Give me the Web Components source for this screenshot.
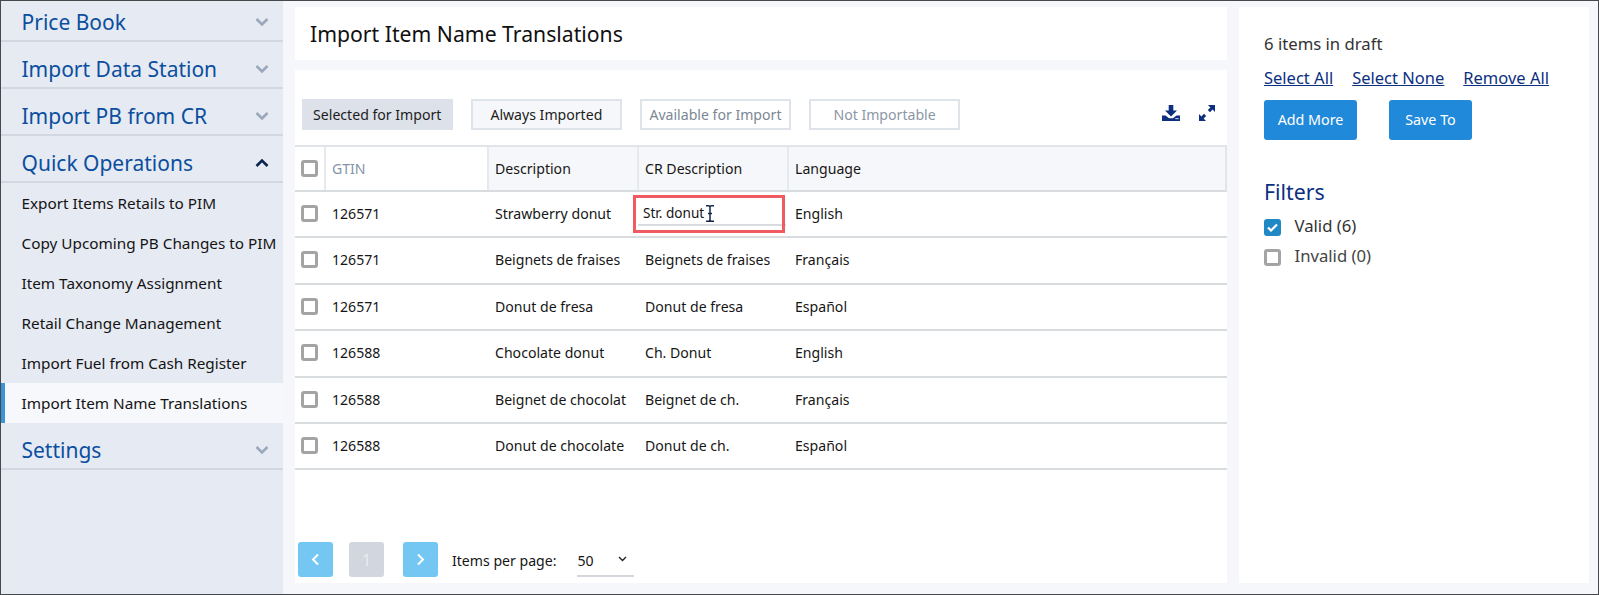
<!DOCTYPE html>
<html lang="en">
<head>
<meta charset="utf-8">
<title>Import Item Name Translations</title>
<style>
  html, body { margin: 0; padding: 0; background: #f6f7fa; }
  body { font-family: "Noto Sans", "Liberation Sans", sans-serif; }
</style>
</head>
<body>
<app-shell>
  <side-nav slot="nav"></side-nav>
  <page-title slot="main">Import Item Name Translations</page-title>
  <import-card slot="main"></import-card>
  <draft-panel slot="aside"></draft-panel>
</app-shell>

<script>
const FONT = '"Noto Sans", "Liberation Sans", sans-serif';

const CHECK_CSS = `
  .cb { width: 17px; height: 17px; box-sizing: border-box; border: 3px solid #a4a4a4; border-radius: 3px; background: #fff; display: block; flex: none; }
  .cb.on { background: #1f88c5; border-color: #1f88c5; display: flex; align-items: center; justify-content: center; }
`;

class AppShell extends HTMLElement {
  constructor() {
    super();
    this.attachShadow({ mode: "open" });
    this.shadowRoot.innerHTML = `
      <style>
        :host {
          display: grid;
          grid-template-columns: 282px 944px 362px;
          width: 1599px;
          height: 595px;
          box-sizing: border-box;
          border: 1px solid #46484c;
          background: #f6f7fa;
          font-family: ${FONT};
          overflow: hidden;
        }
        .nav { display: block; }
        .main { display: flex; flex-direction: column; row-gap: 10px; margin-left: 12px; padding: 6px 0 11px; min-height: 0; }
        .aside { display: flex; padding: 6px 0 11px; margin-left: 12px; min-height: 0; }
      </style>
      <div class="nav"><slot name="nav"></slot></div>
      <div class="main"><slot name="main"></slot></div>
      <div class="aside"><slot name="aside"></slot></div>
    `;
  }
}

class SideNav extends HTMLElement {
  constructor() {
    super();
    this.attachShadow({ mode: "open" });
  }

  connectedCallback() {
    const chevron = (open) => `
      <svg width="14" height="10" viewBox="0 0 14 10" class="${open ? "open" : ""}">
        <path d="${open ? "M1.5 8 7 2.5 12.5 8" : "M1.5 2 7 7.5 12.5 2"}" fill="none" stroke-width="2.6"/>
      </svg>`;
    const head = (label, open) =>
      `<div class="head"><span>${label}</span>${chevron(open)}</div>`;
    const item = (label, active) =>
      `<div class="item ${active ? "active" : ""}">${label}</div>`;
    this.shadowRoot.innerHTML = `
      <style>
        :host { display: block; height: 100%; background: #e6eaf3; }
        .head {
          height: 47px;
          box-sizing: border-box;
          border-bottom: 2px solid #d2d7e2;
          display: flex;
          align-items: center;
          justify-content: space-between;
          padding: 8px 14px 0 20.5px;
          font-size: 21px;
          color: #0b4f9e;
        }
        .head:first-of-type { height: 41px; padding-top: 2px; }
        .head svg { stroke: #9aa8bb; display: block; }
        .head svg.open { stroke: #0b2550; }
        .item {
          height: 40px;
          box-sizing: border-box;
          display: flex;
          align-items: center;
          padding: 0 0 0 20.5px;
          font-size: 15.3px;
          color: #141414;
        }
        .item.active { background: #f6f8fb; box-shadow: inset 4px 0 0 #3a95d8; }
      </style>
      ${head("Price Book")}
      ${head("Import Data Station")}
      ${head("Import PB from CR")}
      ${head("Quick Operations", true)}
      ${item("Export Items Retails to PIM")}
      ${item("Copy Upcoming PB Changes to PIM")}
      ${item("Item Taxonomy Assignment")}
      ${item("Retail Change Management")}
      ${item("Import Fuel from Cash Register")}
      ${item("Import Item Name Translations", true)}
      ${head("Settings")}
    `;
  }
}

class PageTitle extends HTMLElement {
  constructor() {
    super();
    this.attachShadow({ mode: "open" });
    this.shadowRoot.innerHTML = `
      <style>
        :host {
          display: flex;
          align-items: center;
          height: 53px;
          box-sizing: border-box;
          flex: none;
          padding: 0 0 0 15px;
          background: #fff;
          font-size: 21.2px;
          color: #101010;
        }
      </style>
      <slot></slot>
    `;
  }
}

class TabButton extends HTMLElement {
  constructor() {
    super();
    this.attachShadow({ mode: "open" });
    this.shadowRoot.innerHTML = `
      <style>
        :host {
          display: flex;
          align-items: center;
          justify-content: center;
          width: 150.5px;
          height: 31px;
          box-sizing: border-box;
          border: 2px solid #dfe4ea;
          padding-bottom: 1px;
          font-size: 14.1px;
          color: #1c1c1c;
          background: #f6f7fa;
        }
        :host([kind="selected"]) { background: #dde1ea; border-color: #dde1ea; }
        :host([kind="available"]) { background: #fff; color: #7b8794; }
        :host([kind="off"]) { background: #fff; color: #8b97a6; }
      </style>
      <slot></slot>
    `;
  }
}

class ImportCard extends HTMLElement {
  constructor() {
    super();
    this.attachShadow({ mode: "open" });
    this.shadowRoot.innerHTML = `
      <style>
        :host {
          display: flex;
          flex-direction: column;
          flex: 1;
          min-height: 0;
          background: #fff;
          padding-top: 29px;
          padding-bottom: 6px;
        }
        .toolbar { display: flex; align-items: center; justify-content: space-between; padding: 0 12px 0 7px; margin-bottom: 15px; }
        .tabs { display: flex; column-gap: 18.6px; }
        .tools { display: flex; align-items: center; column-gap: 19px; margin-bottom: 3px; }
        svg { display: block; }
        .spacer { flex: 1; }
      </style>
      <div class="toolbar">
        <div class="tabs">
          <tab-button kind="selected">Selected for Import</tab-button>
          <tab-button>Always Imported</tab-button>
          <tab-button kind="available">Available for Import</tab-button>
          <tab-button kind="off">Not Importable</tab-button>
        </div>
        <div class="tools">
          <svg width="18" height="16" viewBox="0 0 18 16" fill="#0c2f7f">
            <path d="M6.7 0h4.6v5.5H15L9 11.4 3 5.5h3.700z"/>
            <path d="M0 10.500h3.500L7 13.300h4l3.500-2.800H18V16H0z"/>
            <rect x="13.500" y="13" width="1.200" height="1.200" fill="#fff"/>
            <rect x="15.300" y="13" width="1.200" height="1.200" fill="#fff"/>
          </svg>
          <svg width="16" height="16" viewBox="0 0 16 16" fill="#0c2f7f">
            <path d="M9 0h7v7l-2.400-2.400-2.600 2.600-2.200-2.200 2.600-2.600z"/>
            <path d="M7 16H0V9l2.400 2.400 2.600-2.600 2.200 2.200-2.600 2.600z"/>
          </svg>
        </div>
      </div>
      <items-table></items-table>
      <div class="spacer"></div>
      <pager-bar></pager-bar>
    `;
  }
}

class ItemsTable extends HTMLElement {
  constructor() {
    super();
    this.attachShadow({ mode: "open" });
  }

  connectedCallback() {
    const rows = [
      ["126571", "Strawberry donut", "Str. donut", "English"],
      ["126571", "Beignets de fraises", "Beignets de fraises", "Français"],
      ["126571", "Donut de fresa", "Donut de fresa", "Español"],
      ["126588", "Chocolate donut", "Ch. Donut", "English"],
      ["126588", "Beignet de chocolat", "Beignet de ch.", "Français"],
      ["126588", "Donut de chocolate", "Donut de ch.", "Español"],
    ];
    this.shadowRoot.innerHTML = `
      <style>
        ${CHECK_CSS}
        :host {
          display: block;
          flex: none;
          font-size: 14.1px;
          color: #161616;
        }
        .row {
          display: grid;
          grid-template-columns: 29px 163px 150px 150px 1fr;
          align-items: center;
          height: 46.4px;
          box-sizing: border-box;
          padding-bottom: 1.5px;
          border-bottom: 2px solid #d9dcdf;
        }
        .row > div { padding-left: 8px; white-space: nowrap; }
        .row > div:first-child { padding-left: 6px; }
        .row.head {
          height: 47px;
          padding-bottom: 0;
          border-top: 2px solid #e1e4e8;
          border-right: 2px solid #e1e4e8;
          align-items: stretch;
          background: #f6f7fa;
        }
        .row.head > div { display: flex; align-items: center; border-left: 2px solid #e6e9ed; padding-left: 6px; }
        .row.head > div:first-child { border-left: 0; background: #fff; }
        .row.head > div:nth-child(2) { background: #fff; color: #8494a8; }
        .edit { position: relative; height: 100%; padding-left: 0 !important; }
        .field {
          position: absolute;
          left: 1px;
          right: 1px;
          top: 3px;
          height: 31px;
          padding: 5px 0 0 5px;
          box-sizing: border-box;
          border-bottom: 2px solid #d9dcdf;
          display: flex;
          align-items: center;
          font-size: 13.6px;
        }
        .box { position: absolute; left: -4px; top: 3px; width: 152px; height: 38px; box-sizing: border-box; border: 3px solid #ef5b61; }
        .caret { position: absolute; left: 68px; top: 13px; display: block; }
      </style>
      <div class="row head">
        <div><span class="cb"></span></div>
        <div>GTIN</div>
        <div>Description</div>
        <div>CR Description</div>
        <div>Language</div>
      </div>
      ${rows.map((row, i) => `
        <div class="row">
          <div><span class="cb"></span></div>
          <div>${row[0]}</div>
          <div>${row[1]}</div>
          ${i === 0
            ? `<div class="edit">
                 <div class="field">${row[2]}</div>
                 <div class="box"></div>
                 <svg class="caret" width="10" height="17" viewBox="0 0 10 17" fill="none" stroke="#15284a" stroke-width="1.5">
                   <path d="M1 .8h2.500c1 0 1.500.5 1.500 1.500v12.400c0 1 -.5 1.500-1.500 1.500H1M9 .8H6.500c-1 0-1.500.5-1.500 1.500M9 16.200H6.500c-1 0-1.500-.5-1.500-1.500M3 8.500h4"/>
                 </svg>
               </div>`
            : `<div>${row[2]}</div>`}
          <div>${row[3]}</div>
        </div>`).join("")}
    `;
  }
}

class PagerBar extends HTMLElement {
  constructor() {
    super();
    this.attachShadow({ mode: "open" });
    this.shadowRoot.innerHTML = `
      <style>
        :host {
          display: flex;
          align-items: center;
          flex: none;
          height: 35px;
          padding-left: 3px;
          font-size: 14.1px;
          color: #161616;
        }
        .btn {
          width: 35px;
          height: 35px;
          border-radius: 3px;
          background: #74c7f2;
          display: flex;
          align-items: center;
          justify-content: center;
          color: #fff;
        }
        .btn.num { background: #d2d6de; margin: 0 19px 0 16px; font-size: 17px; color: #e9ebef; }
        .label { margin-left: 14px; padding-top: 1px; }
        .select {
          margin-left: 21px;
          width: 57px;
          height: 28px;
          box-sizing: border-box;
          border-bottom: 2px solid #d4d7db;
          display: flex;
          align-items: center;
          justify-content: space-between;
          padding: 0 7px 2px 0;
          position: relative;
          top: 3px;
        }
        .select svg { position: relative; top: -2px; }
        svg { display: block; }
      </style>
      <div class="btn"><svg width="9" height="13" viewBox="0 0 9 13" fill="none" stroke="#fff" stroke-width="2"><path d="M7 1.500 2 6.500l5 5"/></svg></div>
      <div class="btn num">1</div>
      <div class="btn"><svg width="9" height="13" viewBox="0 0 9 13" fill="none" stroke="#fff" stroke-width="2"><path d="M2 1.500l5 5-5 5"/></svg></div>
      <div class="label">Items per page:</div>
      <div class="select">50<svg width="9" height="6" viewBox="0 0 9 6" fill="none" stroke="#222" stroke-width="1.400"><path d="M1 1l3.500 3.500L8 1"/></svg></div>
    `;
  }
}

class DraftPanel extends HTMLElement {
  constructor() {
    super();
    this.attachShadow({ mode: "open" });
    this.shadowRoot.innerHTML = `
      <style>
        ${CHECK_CSS}
        :host {
          display: block;
          flex: 1;
          background: #fff;
          padding: 26px 0 0 25px;
          color: #333;
          font-size: 16.7px;
        }
        .count { line-height: 22px; }
        .links { display: flex; column-gap: 19px; margin-top: 12px; line-height: 22px; font-size: 16.5px; color: #0c2f7f; text-decoration: underline; }
        .btns { display: flex; column-gap: 32px; margin-top: 11px; }
        .btn {
          height: 40px;
          box-sizing: border-box;
          padding-bottom: 1px;
          background: #2089d9;
          border-radius: 3px;
          color: #fff;
          font-size: 14.3px;
          display: flex;
          align-items: center;
          justify-content: center;
        }
        h2 { margin: 36px 0 0; font-size: 21.3px; font-weight: 400; line-height: 32px; color: #0c2f7f; }
        .filter { display: flex; align-items: center; column-gap: 13.5px; height: 30px; }
        .filter span:last-child { position: relative; top: -2px; }
        .filters { margin-top: 4px; }
        .filter.off { color: #444; }
      </style>
      <div class="count">6 items in draft</div>
      <div class="links"><span>Select All</span><span>Select None</span><span>Remove All</span></div>
      <div class="btns">
        <div class="btn" style="width:93px">Add More</div>
        <div class="btn" style="width:83px">Save To</div>
      </div>
      <h2>Filters</h2>
      <div class="filters">
        <div class="filter">
          <span class="cb on"><svg width="11" height="9" viewBox="0 0 11 9" fill="none" stroke="#fff" stroke-width="2.200"><path d="M1 4.500 4 7.500 10 1.500"/></svg></span>
          <span>Valid (6)</span>
        </div>
        <div class="filter off"><span class="cb"></span><span>Invalid (0)</span></div>
      </div>
    `;
  }
}

customElements.define("app-shell", AppShell);
customElements.define("side-nav", SideNav);
customElements.define("page-title", PageTitle);
customElements.define("tab-button", TabButton);
customElements.define("import-card", ImportCard);
customElements.define("items-table", ItemsTable);
customElements.define("pager-bar", PagerBar);
customElements.define("draft-panel", DraftPanel);
</script>
</body>
</html>
